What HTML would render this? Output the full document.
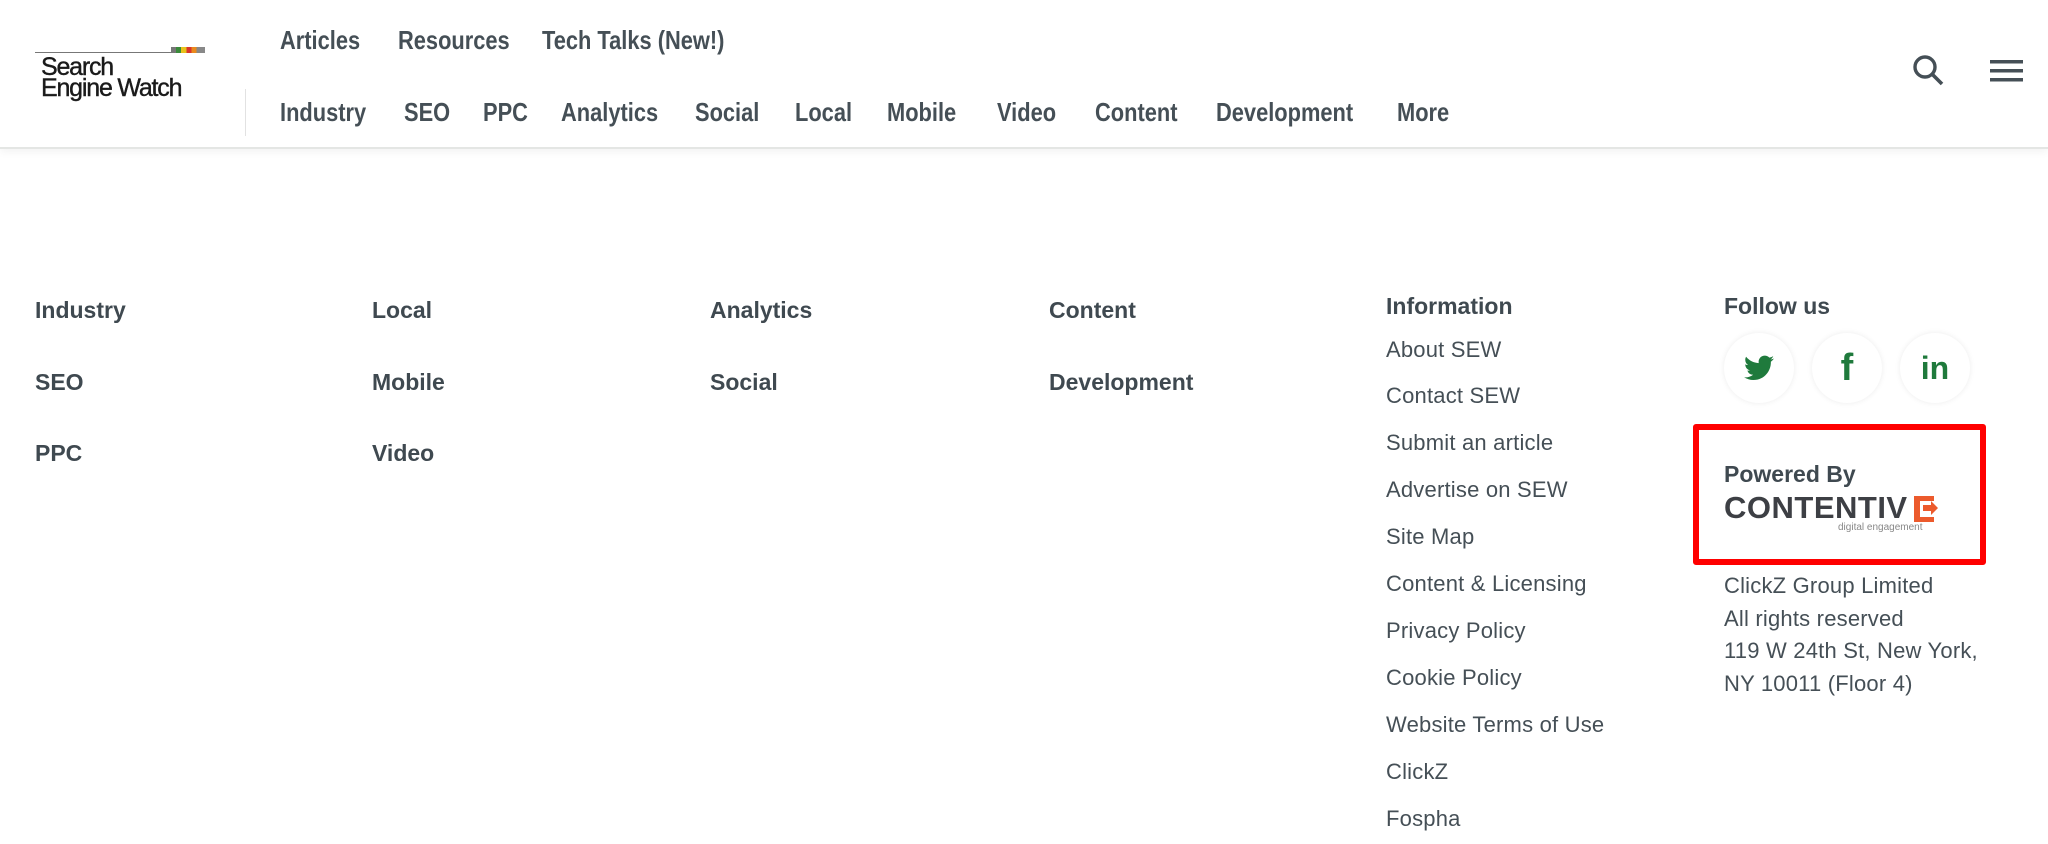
<!DOCTYPE html>
<html><head><meta charset="utf-8"><style>
*{margin:0;padding:0;box-sizing:border-box}
body{width:2048px;height:844px;background:#fff;font-family:"Liberation Sans",sans-serif;color:#3f4950;position:relative;overflow:hidden}
.a{position:absolute;white-space:nowrap}
.hdr{position:absolute;left:0;top:0;width:2048px;height:149px;border-bottom:2px solid #e4e6e4;box-shadow:0 3px 8px rgba(0,0,0,.05)}
.nav{font-weight:bold;font-size:26px;color:#454f56;line-height:30px;transform:scaleX(0.84);transform-origin:0 0}
.fh{font-weight:bold;font-size:23px;line-height:28px;color:#3f4950}
.fl{font-size:22px;line-height:28px;color:#454f56;letter-spacing:0.2px}
.circ{position:absolute;width:70px;height:70px;border-radius:50%;background:#fff;box-shadow:0 0 6px rgba(0,0,0,.08);display:flex;align-items:center;justify-content:center;color:#1f7a3c;font-weight:bold}
</style></head><body>
<div class="hdr"></div>
<div class="a" style="left:35px;top:52px;width:136px;height:1px;background:#777"></div>
<div class="a" style="left:171px;top:47px;width:34px;height:6px;background:linear-gradient(90deg,#777 0 15%,#3a8a3a 15% 30%,#e8c21a 30% 45%,#d9342b 45% 60%,#e98a1c 60% 75%,#888 75%)"></div>
<div class="a" style="left:41px;top:57px;font-size:25px;line-height:21px;color:#1a1a1a;letter-spacing:-1.2px;-webkit-text-stroke:0.4px #1a1a1a">Search<br>Engine Watch</div>
<div class="a" style="left:245px;top:89px;width:1px;height:47px;background:#e2e2e2"></div>
<div class="a nav" style="left:280px;top:25px">Articles</div>
<div class="a nav" style="left:398px;top:25px">Resources</div>
<div class="a nav" style="left:542px;top:25px">Tech Talks (New!)</div>
<div class="a nav" style="left:280px;top:97px">Industry</div>
<div class="a nav" style="left:404px;top:97px">SEO</div>
<div class="a nav" style="left:483px;top:97px">PPC</div>
<div class="a nav" style="left:561px;top:97px">Analytics</div>
<div class="a nav" style="left:695px;top:97px">Social</div>
<div class="a nav" style="left:795px;top:97px">Local</div>
<div class="a nav" style="left:887px;top:97px">Mobile</div>
<div class="a nav" style="left:997px;top:97px">Video</div>
<div class="a nav" style="left:1095px;top:97px">Content</div>
<div class="a nav" style="left:1216px;top:97px">Development</div>
<div class="a nav" style="left:1397px;top:97px">More</div>
<svg class="a" style="left:1912px;top:54px" width="36" height="36" viewBox="0 0 36 36"><circle cx="13" cy="13" r="10" fill="none" stroke="#454f56" stroke-width="3.4"/><line x1="20.5" y1="20.5" x2="30" y2="30" stroke="#454f56" stroke-width="3.6"/></svg>
<svg class="a" style="left:1990px;top:58px" width="34" height="26" viewBox="0 0 34 26"><rect x="0" y="2" width="33" height="3.5" fill="#454f56"/><rect x="0" y="11" width="33" height="3.5" fill="#454f56"/><rect x="0" y="20" width="33" height="3.5" fill="#454f56"/></svg>
<div class="a fh" style="left:35px;top:296px">Industry</div>
<div class="a fh" style="left:35px;top:368px">SEO</div>
<div class="a fh" style="left:35px;top:439px">PPC</div>
<div class="a fh" style="left:372px;top:296px">Local</div>
<div class="a fh" style="left:372px;top:368px">Mobile</div>
<div class="a fh" style="left:372px;top:439px">Video</div>
<div class="a fh" style="left:710px;top:296px">Analytics</div>
<div class="a fh" style="left:710px;top:368px">Social</div>
<div class="a fh" style="left:1049px;top:296px">Content</div>
<div class="a fh" style="left:1049px;top:368px">Development</div>
<div class="a fh" style="left:1386px;top:292px">Information</div>
<div class="a fl" style="left:1386px;top:336px">About SEW</div>
<div class="a fl" style="left:1386px;top:382px">Contact SEW</div>
<div class="a fl" style="left:1386px;top:429px">Submit an article</div>
<div class="a fl" style="left:1386px;top:476px">Advertise on SEW</div>
<div class="a fl" style="left:1386px;top:523px">Site Map</div>
<div class="a fl" style="left:1386px;top:570px">Content &amp; Licensing</div>
<div class="a fl" style="left:1386px;top:617px">Privacy Policy</div>
<div class="a fl" style="left:1386px;top:664px">Cookie Policy</div>
<div class="a fl" style="left:1386px;top:711px">Website Terms of Use</div>
<div class="a fl" style="left:1386px;top:758px">ClickZ</div>
<div class="a fl" style="left:1386px;top:805px">Fospha</div>
<div class="a fh" style="left:1724px;top:292px">Follow us</div>
<div class="circ" style="left:1724px;top:333px"><svg width="30" height="26" viewBox="0 0 24 20"><path fill="#1f7a3c" d="M24 2.4c-.9.4-1.8.6-2.8.8 1-.6 1.8-1.6 2.2-2.7-1 .6-2 1-3.1 1.2C19.3.7 18 .1 16.6.1c-2.7 0-4.900 2.200-4.900 4.900 0 .4 0 .8.1 1.100C7.7 5.9 4.1 4 1.7 1 1.2 1.8 1 2.6 1 3.5c0 1.7.9 3.2 2.2 4.1-.8 0-1.6-.2-2.2-.6v.1c0 2.4 1.7 4.4 3.9 4.8-.4.1-.8.2-1.3.2-.3 0-.6 0-.9-.1.6 2 2.4 3.4 4.6 3.4-1.7 1.3-3.8 2.1-6.1 2.1-.4 0-.8 0-1.2-.1 2.2 1.4 4.8 2.2 7.5 2.2 9.1 0 14-7.5 14-14v-.6c1-.7 1.8-1.6 2.5-2.6z"/></svg></div>
<div class="circ" style="left:1812px;top:333px;font-size:38px">f</div>
<div class="circ" style="left:1900px;top:333px;font-size:32px">in</div>
<div class="a" style="left:1693px;top:424px;width:293px;height:141px;border:6px solid #f00;border-radius:3px"></div>
<div class="a fh" style="left:1724px;top:460px">Powered By</div>
<div class="a" style="left:1724px;top:492px;font-weight:bold;font-size:31px;line-height:32px;color:#3d3f44;letter-spacing:0.5px">CONTENTIV</div>
<svg class="a" style="left:1914px;top:496px" width="26" height="26" viewBox="0 0 26 26"><path d="M0 0h20v5H6v16h14v5H0z" fill="#ec5a2c"/><path d="M9 9h8v-4l7 7-7 7v-4H9z" fill="#ec5a2c"/></svg>
<div class="a" style="left:1838px;top:522px;font-size:10px;color:#888">digital engagement</div>
<div class="a fl" style="left:1724px;top:570px;line-height:32.5px">ClickZ Group Limited<br>All rights reserved<br>119 W 24th St, New York,<br>NY 10011 (Floor 4)</div>
</body></html>
